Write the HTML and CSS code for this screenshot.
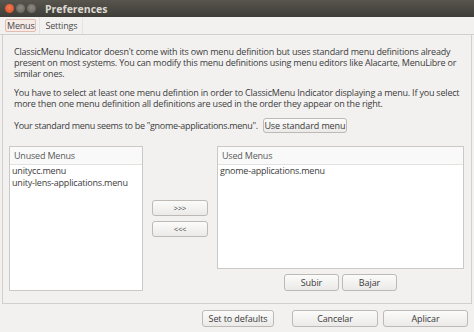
FILE: index.html
```html
<!DOCTYPE html>
<html lang="en">
<head>
    <meta charset="UTF-8">
    <title>Preferences</title>
    <link rel="stylesheet" href="styles.css">
</head>
<body>
    <div class="window">
        <div class="titlebar">
            <span class="wbtn close"></span>
            <span class="wbtn"></span>
            <span class="wbtn"></span>
            <span class="title">Preferences</span>
        </div>

        <div class="tabs">
            <div class="tab active"><span class="focus">Menus</span></div>
            <div class="tab">Settings</div>
        </div>

        <div class="notebook">
            <p class="text">ClassicMenu Indicator doesn't come with its own menu definition but uses standard menu definitions already present on most systems. You can modify this menu definitions using menu editors like Alacarte, MenuLibre or similar ones.</p>
            <p class="text second">You have to select at least one menu defintion in order to ClassicMenu Indicator displaying a menu. If you select more then one menu definition all definitions are used in the order they appear on the right.</p>
            <div class="std-row">
                <span class="std-label">Your standard menu seems to be "gnome-applications.menu".</span>
                <button class="btn std-btn">Use standard menu</button>
            </div>

            <div class="lists">
                <div class="list unused">
                    <div class="list-head">Unused Menus</div>
                    <div class="item">unitycc.menu</div>
                    <div class="item">unity-lens-applications.menu</div>
                </div>
                <div class="movers">
                    <button class="btn mover">&gt;&gt;&gt;</button>
                    <button class="btn mover">&lt;&lt;&lt;</button>
                </div>
                <div class="used-col">
                    <div class="list used">
                        <div class="list-head">Used Menus</div>
                        <div class="item">gnome-applications.menu</div>
                    </div>
                    <div class="order">
                        <button class="btn order-btn">Subir</button>
                        <button class="btn order-btn">Bajar</button>
                    </div>
                </div>
            </div>
        </div>

        <div class="actions">
            <button class="btn defaults">Set to defaults</button>
            <button class="btn cancel">Cancelar</button>
            <button class="btn apply">Aplicar</button>
        </div>
    </div>
</body>
</html>
```

FILE: styles.css
```css
* {
    box-sizing: border-box;
}
body {
    margin: 0;
    padding: 0;
    font-family: "Open Sans", "DejaVu Sans", sans-serif;
    font-size: 9px;
    letter-spacing: -0.2px;
    color: #3c3c3c;
    background-color: #f2f1f0;
}
.window {
    width: 474px;
    height: 332px;
    overflow: hidden;
    background: #f2f1f0;
}
.titlebar {
    height: 17px;
    display: flex;
    align-items: center;
    padding-left: 5px;
    background: linear-gradient(#58554e, #3f3d38);
}
.wbtn {
    width: 9px;
    height: 9px;
    border-radius: 50%;
    margin-right: 2px;
    background: radial-gradient(circle at 50% 40%, #8e8b85, #5e5b55);
}
.wbtn.close {
    background: radial-gradient(circle at 50% 40%, #f27b55, #d2491f);
}
.title {
    margin-left: 7px;
    color: #dcd9d2;
    font-weight: bold;
    font-size: 10.5px;
    letter-spacing: 0;
}
.tabs {
    height: 18px;
    display: flex;
    padding-left: 2px;
    border-bottom: 1px solid #d2d0cc;
    background: #f2f1f0;
}
.tab {
    display: flex;
    align-items: center;
    padding: 0 5px;
    border-right: 1px solid #e6e4e0;
    color: #4a4a4a;
}
.tab.active {
    padding: 0 3px;
}
.focus {
    border: 1px solid #e2bcae;
    background: #f6ebe6;
    border-radius: 2px;
    padding: 0 1px;
    line-height: 11px;
}
.notebook {
    margin: 0 2px;
    height: 269px;
    padding: 11px 7px 0 6px;
    border: 1px solid #d2d0cc;
    border-top: none;
}
.text {
    margin: 0 0 0 5px;
    line-height: 11px;
}
.second {
    margin-top: 8px;
}
.std-row {
    display: flex;
    align-items: center;
    margin: 9px 0 0 5px;
    white-space: nowrap;
}
.std-label {
    letter-spacing: -0.3px;
}
.btn {
    font-family: inherit;
    font-size: 9px;
    letter-spacing: -0.1px;
    color: #3c3c3c;
    padding: 0;
    white-space: nowrap;
    border: 1px solid #bdbab5;
    border-radius: 3px;
    background: linear-gradient(#fbfbfa, #ebeae8);
}
.std-btn {
    margin-left: 5px;
    width: 84px;
    height: 15px;
}
.lists {
    display: flex;
    margin-top: 13px;
}
.list {
    background: #fff;
    border: 1px solid #cbc9c5;
}
.list-head {
    height: 18px;
    line-height: 17px;
    padding-left: 4px;
    color: #5a5a5a;
    background: #f9f9f9;
    border-bottom: 1px solid #e3e2df;
}
.item {
    height: 12px;
    line-height: 12px;
    padding-left: 2px;
}
.unused {
    width: 134px;
    height: 145px;
}
.movers {
    width: 74px;
    display: flex;
    flex-direction: column;
    justify-content: center;
    align-items: center;
    gap: 5px;
}
.mover {
    width: 56px;
    height: 16px;
    font-size: 7.5px;
}
.used-col {
    width: 247px;
}
.used {
    height: 123px;
}
.order {
    display: flex;
    justify-content: center;
    gap: 3px;
    margin-top: 5px;
}
.order-btn {
    width: 55px;
    height: 17px;
}
.actions {
    display: flex;
    justify-content: flex-end;
    padding: 6px 6px 0 0;
}
.actions .btn {
    height: 17px;
}
.defaults {
    width: 72px;
    margin-right: 18px;
}
.cancel {
    width: 86px;
    margin-right: 5px;
}
.apply {
    width: 85px;
}
```
